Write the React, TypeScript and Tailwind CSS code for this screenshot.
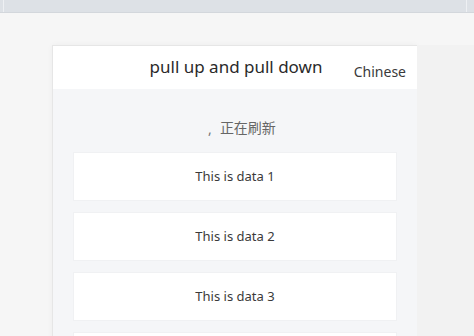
import React from "react";

export default function App() {
  const items = [1, 2, 3];
  return (
    <div
      className="w-[474px] h-[336px] overflow-hidden bg-[#f6f6f6] flex flex-col"
      style={{ fontFamily: '"Noto Sans", "Noto Sans CJK SC", sans-serif' }}
    >
      <div className="h-[13px] shrink-0 bg-[#dde1e6] border-b border-[#d3d7dc] flex justify-between px-[3px]">
        <div className="w-px h-full bg-[#eef0f3]" />
        <div className="w-px h-full bg-[#eef0f3] mr-[4px]" />
      </div>
      <div className="flex-1 pt-[32px] pl-[52px] flex">
        <div className="w-[365px] flex flex-col border-l border-t border-[#e6e6e6] bg-[#f5f6f8] shadow-[0_0_6px_rgba(0,0,0,0.04)]">
          <div className="h-[43px] shrink-0 bg-white relative flex items-center justify-center">
            <span className="text-[17px] text-[#2a2a2a] mt-[-2px] ml-[2px]">pull up and pull down</span>
            <span className="absolute right-[11px] top-[16px] text-[14px] leading-[20px] text-[#3a3a3a]">Chinese</span>
          </div>
          <div className="flex-1 flex flex-col px-[20px]">
            <div className="mt-[29px] mb-[14px] h-[20px] flex items-center justify-center text-[14px] leading-[20px] text-[#666]">
              <span className="text-[#777] mr-[8px] mt-[2px] ml-[14px]">,</span>
              <span>正在刷新</span>
            </div>
            <div className="flex flex-col gap-[11px]">
              {items.map((n) => (
                <div
                  key={n}
                  className="h-[49px] w-[324px] bg-white border border-[#f0f1f3] flex items-center justify-center text-[13px] text-[#3a3a3a] shrink-0"
                >
                  This is data {n}
                </div>
              ))}
              <div className="h-[49px] w-[324px] bg-white border border-[#f0f1f3] shrink-0" />
            </div>
          </div>
        </div>
        <div className="w-[57px] bg-[#f2f2f2]" />
      </div>
    </div>
  );
}
